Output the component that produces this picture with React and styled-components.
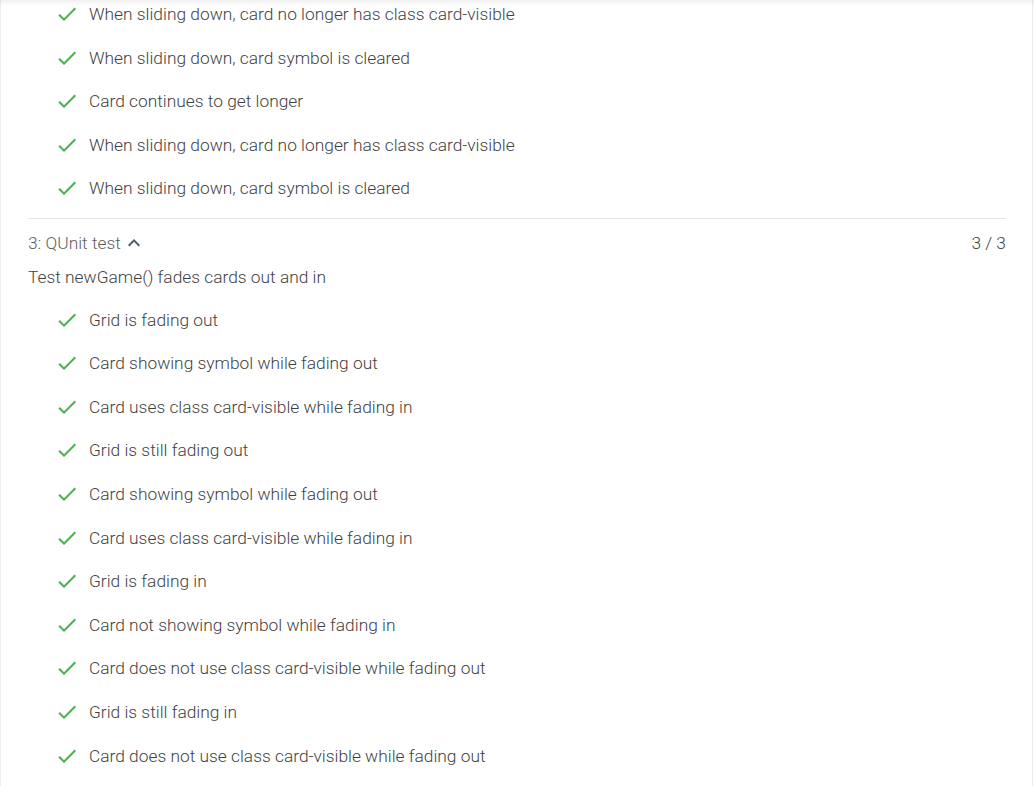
import React from "react";
import styled, { createGlobalStyle } from "styled-components";

const Global = createGlobalStyle`
  html, body { margin: 0; padding: 0; background: #ffffff; }
  body { font-family: Roboto, "Noto Sans", sans-serif; overflow: hidden; }
`;

const Page = styled.div`
  position: relative;
  height: 786px;
  overflow: hidden;
`;

const TopShade = styled.div`
  position: absolute;
  left: 0;
  right: 0;
  top: 0;
  height: 6px;
  background: linear-gradient(to bottom, rgba(0,0,0,0.06), rgba(0,0,0,0));
  pointer-events: none;
`;

const Card = styled.div`
  margin: 0 2px 0 1px;
  background: #fff;
  box-shadow: 0 0 2px rgba(0,0,0,0.22);
  padding: 0 26px 40px 27px;
`;

const List = styled.ul`
  list-style: none;
  margin: ${(p) => p.$top || 0} 0 0 0;
  padding: 0 0 0 26.6px;
`;

const Item = styled.li`
  display: flex;
  align-items: center;
  height: 43.6px;
  font-size: 17.35px;
  font-weight: 300;
  color: #3f3f3f;
`;

const CheckIcon = styled.svg`
  width: 24px;
  height: 24px;
  flex: none;
  margin-right: 10.4px;
  fill: #4caf50;
`;

const Divider = styled.hr`
  border: none;
  border-top: 1px solid #e6e6e6;
  margin: 8px 0 0 0;
`;

const Header = styled.div`
  display: flex;
  align-items: center;
  justify-content: space-between;
  height: 24px;
  margin-top: 12px;
  font-size: 17.35px;
  font-weight: 300;
  color: #5e5e5e;
`;

const HeaderLeft = styled.div`
  display: flex;
  align-items: center;
  gap: 1px;
`;

const Chevron = styled.svg`
  width: 24px;
  height: 24px;
  fill: #4f5b65;
`;

const Count = styled.span`
  color: #444;
  font-size: 17.35px;
  font-weight: 300;
`;

const Title = styled.div`
  height: 20px;
  line-height: 20px;
  margin-top: 11.5px;
  margin-bottom: 11.2px;
  font-size: 17.35px;
  font-weight: 300;
  color: #3f3f3f;
`;

const Check = () => (
  <CheckIcon viewBox="0 0 24 24">
    <path d="M9 16.17L4.83 12l-1.42 1.41L9 19 21 7l-1.41-1.41z" />
  </CheckIcon>
);

const first = [
  "When sliding down, card no longer has class card-visible",
  "When sliding down, card symbol is cleared",
  "Card continues to get longer",
  "When sliding down, card no longer has class card-visible",
  "When sliding down, card symbol is cleared",
];

const second = [
  "Grid is fading out",
  "Card showing symbol while fading out",
  "Card uses class card-visible while fading in",
  "Grid is still fading out",
  "Card showing symbol while fading out",
  "Card uses class card-visible while fading in",
  "Grid is fading in",
  "Card not showing symbol while fading in",
  "Card does not use class card-visible while fading out",
  "Grid is still fading in",
  "Card does not use class card-visible while fading out",
];

export default function App() {
  return (
    <>
      <Global />
      <Page>
        <Card>
          <List $top="-7.8px">
            {first.map((t, i) => (
              <Item key={i}>
                <Check />
                {t}
              </Item>
            ))}
          </List>
          <Divider />
          <Header>
            <HeaderLeft>
              3: QUnit test
              <Chevron viewBox="0 0 24 24">
                <path d="M12 8l-6 6 1.41 1.41L12 10.83l4.59 4.58L18 14z" />
              </Chevron>
            </HeaderLeft>
            <Count>3 / 3</Count>
          </Header>
          <Title>Test newGame() fades cards out and in</Title>
          <List>
            {second.map((t, i) => (
              <Item key={i}>
                <Check />
                {t}
              </Item>
            ))}
          </List>
        </Card>
        <TopShade />
      </Page>
    </>
  );
}
